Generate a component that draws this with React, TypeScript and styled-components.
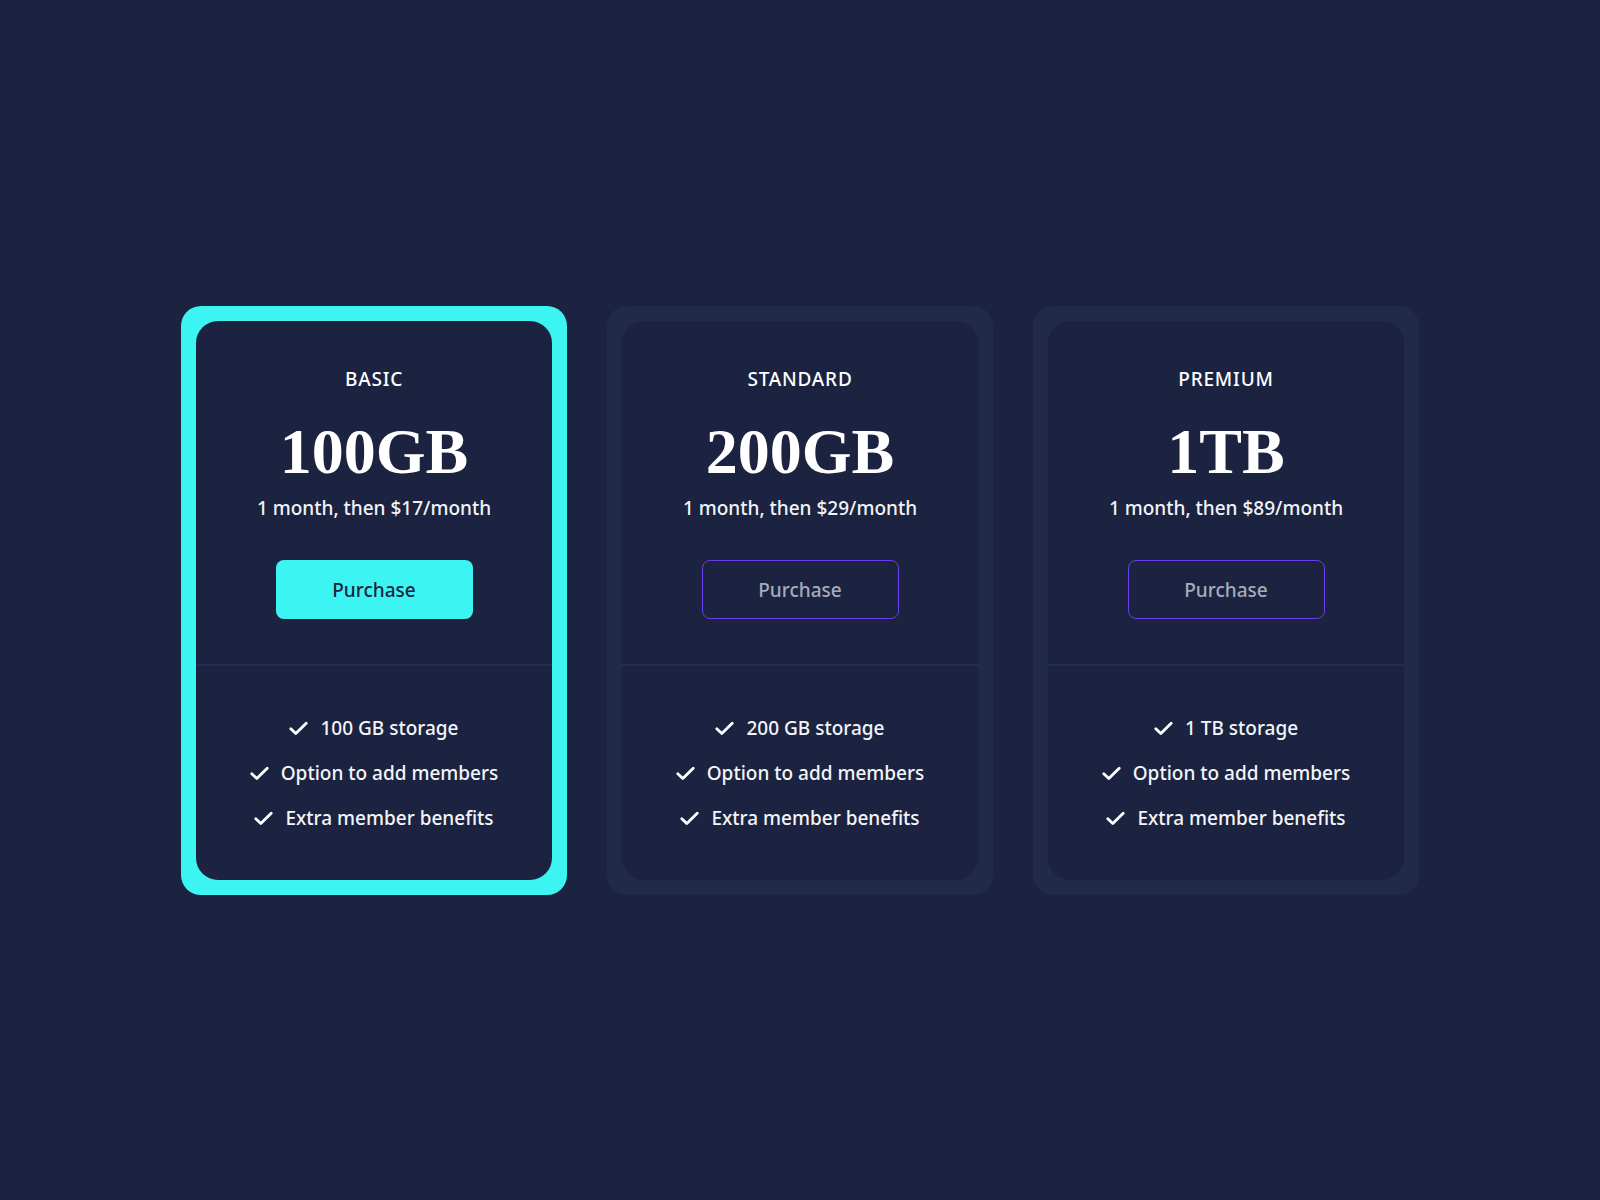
import React from "react";
import styled, { createGlobalStyle } from "styled-components";

const Global = createGlobalStyle`
  html, body { margin: 0; padding: 0; background: #1b2340; }
  body { font-family: "Noto Sans", "Open Sans", sans-serif; }
  #root { min-height: 1200px; }
`;

const Page = styled.main`
  width: 1600px;
  height: 1200px;
  display: flex;
  align-items: flex-start;
  justify-content: center;
  padding-top: 306px;
  box-sizing: border-box;
  gap: 40px;
`;

const Card = styled.section<{ $active?: boolean }>`
  width: 386px;
  box-sizing: border-box;
  padding: 15px;
  border-radius: 20px;
  background: ${(p) => (p.$active ? "#3cf5f2" : "#212a49")};
`;

const Panel = styled.div`
  background: #1b2341;
  border-radius: 22px;
  height: 559px;
  display: flex;
  flex-direction: column;
  overflow: hidden;
`;

const Top = styled.div`
  display: flex;
  flex-direction: column;
  align-items: center;
  padding: 46px 0 45px;
  border-bottom: 2px solid #242d4e;
`;

const Tier = styled.div`
  color: #ffffff;
  font-size: 19px;
  font-weight: 500;
  line-height: 24px;
  letter-spacing: 0.8px;
`;

const Size = styled.div`
  margin-top: 28px;
  color: #ffffff;
  font-family: "Liberation Serif", "DejaVu Serif", serif;
  font-weight: 700;
  font-size: 64px;
  line-height: 66px;
`;

const Price = styled.div`
  margin-top: 10px;
  color: #f2f3f7;
  font-size: 19px;
  font-weight: 500;
  line-height: 26px;
`;

const Button = styled.button<{ $primary?: boolean }>`
  margin-top: 39px;
  width: 197px;
  height: 59px;
  border-radius: 8px;
  box-sizing: border-box;
  font-family: inherit;
  font-size: 19px;
  font-weight: 500;
  cursor: pointer;
  background: ${(p) => (p.$primary ? "#3cf5f2" : "transparent")};
  color: ${(p) => (p.$primary ? "#1b2340" : "#a7abbb")};
  border: ${(p) => (p.$primary ? "none" : "1px solid #6a3cf2")};
`;

const Features = styled.ul`
  list-style: none;
  margin: 0;
  padding: 49px 0 0;
  display: flex;
  flex-direction: column;
  align-items: center;
  gap: 19px;
`;

const Feature = styled.li`
  display: flex;
  align-items: center;
  gap: 12px;
  color: #f4f5f8;
  font-size: 19px;
  font-weight: 500;
  line-height: 26px;
`;

const Check = () => (
  <svg width="19" height="15" viewBox="0 0 19 15" fill="none">
    <path d="M1.8 7.8 L6.8 12.6 L17.2 2.2" stroke="#ffffff" strokeWidth="2.8" strokeLinecap="round" strokeLinejoin="round" />
  </svg>
);

const plans = [
  { tier: "BASIC", size: "100GB", price: "$17", storage: "100 GB storage", active: true },
  { tier: "STANDARD", size: "200GB", price: "$29", storage: "200 GB storage", active: false },
  { tier: "PREMIUM", size: "1TB", price: "$89", storage: "1 TB storage", active: false },
];

export default function App() {
  return (
    <>
      <Global />
      <Page>
        {plans.map((p) => (
          <Card key={p.tier} $active={p.active}>
            <Panel>
              <Top>
                <Tier>{p.tier}</Tier>
                <Size>{p.size}</Size>
                <Price>1 month, then {p.price}/month</Price>
                <Button $primary={p.active}>Purchase</Button>
              </Top>
              <Features>
                {[p.storage, "Option to add members", "Extra member benefits"].map((f) => (
                  <Feature key={f}>
                    <Check />
                    {f}
                  </Feature>
                ))}
              </Features>
            </Panel>
          </Card>
        ))}
      </Page>
    </>
  );
}
